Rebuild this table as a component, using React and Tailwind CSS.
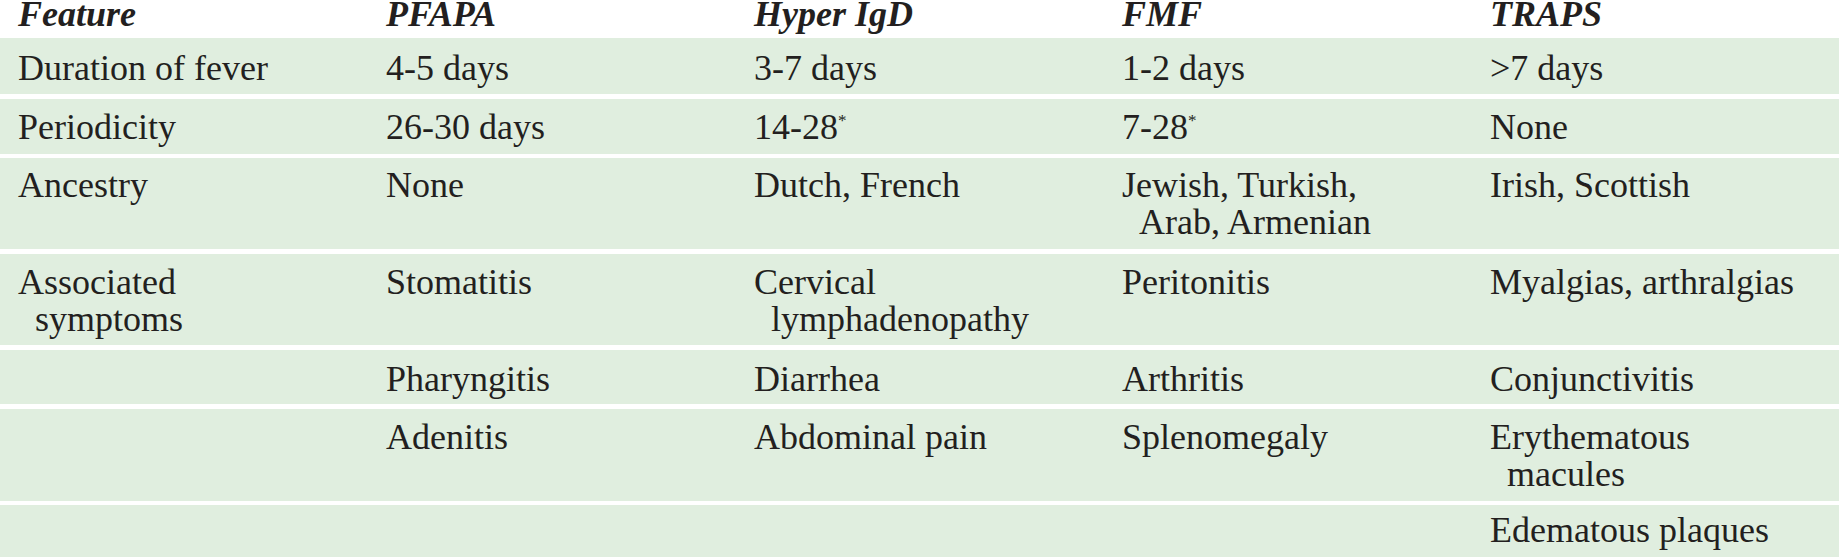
import React from "react";

// Periodic fever syndromes comparison table
const HEAD = ["Feature", "PFAPA", "Hyper IgD", "FMF", "TRAPS"];

// each cell is a list of lines; lines after the first get a hanging indent
const ROWS = [
  {
    box: "mt-0 h-[56px] pt-[12px]",
    cells: [["Duration of fever"], ["4-5 days"], ["3-7 days"], ["1-2 days"], [">7 days"]],
  },
  {
    box: "mt-[5px] h-[55px] pt-[10px]",
    cells: [["Periodicity"], ["26-30 days"], ["14-28*"], ["7-28*"], ["None"]],
  },
  {
    box: "mt-[4px] h-[91px] pt-[9px]",
    cells: [["Ancestry"], ["None"], ["Dutch, French"], ["Jewish, Turkish,", "Arab, Armenian"], ["Irish, Scottish"]],
  },
  {
    box: "mt-[5px] h-[91px] pt-[10px]",
    cells: [["Associated", "symptoms"], ["Stomatitis"], ["Cervical", "lymphadenopathy"], ["Peritonitis"], ["Myalgias, arthralgias"]],
  },
  {
    box: "mt-[5px] h-[54px] pt-[11px]",
    cells: [[], ["Pharyngitis"], ["Diarrhea"], ["Arthritis"], ["Conjunctivitis"]],
  },
  {
    box: "mt-[5px] h-[92px] pt-[10px]",
    cells: [[], ["Adenitis"], ["Abdominal pain"], ["Splenomegaly"], ["Erythematous", "macules"]],
  },
  {
    box: "mt-[4px] h-[52px] pt-[7px]",
    cells: [[], [], [], [], ["Edematous plaques"]],
  },
];

const Line = ({ text, indent }) => {
  const star = text.endsWith("*");
  const body = star ? text.slice(0, -1) : text;
  return (
    <div className={`whitespace-nowrap ${indent ? "pl-[17px]" : ""}`}>
      {body}
      {star && <span className="relative -top-[13px] text-[17px]">*</span>}
    </div>
  );
};

export default function App() {
  return (
    <div
      className="w-[1839px] h-[559px] bg-white text-[#231f20] overflow-hidden"
      style={{ fontFamily: '"Liberation Serif", "Times New Roman", serif' }}
    >
      {/* header */}
      <div className="flex h-[38px] pl-[18px] text-[36px] leading-[28px] font-bold italic">
        {HEAD.map((h, i) => (
          <div key={h} className={i === 4 ? "flex-1" : "w-[368px] shrink-0"}>
            {h}
          </div>
        ))}
      </div>

      {ROWS.map((row, r) => (
        <div key={r} className={`flex bg-[#e0eedf] pl-[18px] text-[36px] leading-[37px] ${row.box}`}>
          {row.cells.map((lines, i) => (
            <div key={i} className={i === 4 ? "flex-1" : "w-[368px] shrink-0"}>
              {lines.map((t, j) => (
                <Line key={j} text={t} indent={j > 0} />
              ))}
            </div>
          ))}
        </div>
      ))}
    </div>
  );
}
